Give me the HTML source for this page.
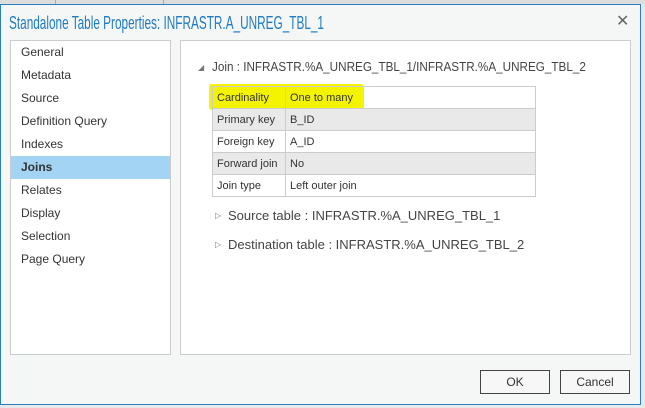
<!DOCTYPE html>
<html><head><style>
*{margin:0;padding:0;box-sizing:border-box}
body{width:645px;height:408px;background:#e8e8e8;font-family:"Liberation Sans",sans-serif;position:relative;overflow:hidden;font-size:12px;color:#333}
.dlg{position:absolute;left:0;top:4px;width:641px;height:401px;background:#f5f6f6;border:1px solid #2a7fc4}
.title{position:absolute;left:8px;top:8px;font-size:18px;color:#1f7bc2;white-space:nowrap;transform:scaleX(0.655);transform-origin:0 0}
.x{position:absolute;left:615px;top:6px;font-size:16px;color:#666}
.list{position:absolute;left:9px;top:35px;width:161px;height:315px;background:#fff;border:1px solid #ccc}
.list div{height:23px;line-height:22px;padding-left:10px;font-size:12px;color:#333}
.list .sel{background:#a3d4f3;font-weight:bold}
.content{position:absolute;left:179px;top:35px;width:451px;height:315px;background:#fff;border:1px solid #ccc}
.h{position:absolute;font-size:13px;color:#444;white-space:nowrap}
.tri{position:absolute;font-size:8px;color:#777}
table{position:absolute;left:31px;top:45px;border-collapse:collapse;width:324px;font-size:11px}
td{border:1px solid #ccc;height:22px;padding-left:4px;color:#333}
td:first-child{width:73px}
tr.g td{background:#e9e9e9}
.hl{position:absolute;left:28px;top:43px;width:155px;height:26px;background:#f4f400;border-radius:3px}
.btn{position:absolute;top:365px;width:70px;height:24px;border:1px solid #444;background:#f7f7f7;text-align:center;line-height:22px;font-size:12px}
</style></head><body>
<div style="position:absolute;left:0;top:0;width:645px;height:4px;background:#ddd"></div>
<div style="position:absolute;left:55px;top:0;width:1px;height:4px;background:#aaa"></div>
<div style="position:absolute;left:163px;top:0;width:1px;height:4px;background:#aaa"></div>
<div class="dlg">
<div class="title">Standalone Table Properties: INFRASTR.A_UNREG_TBL_1</div>
<div class="x">✕</div>
<div class="list">
<div>General</div><div>Metadata</div><div>Source</div><div>Definition Query</div><div>Indexes</div><div class="sel">Joins</div><div>Relates</div><div>Display</div><div>Selection</div><div>Page Query</div>
</div>
<div class="content">
<div class="tri" style="left:17px;top:22px">◢</div>
<div class="h" style="left:31px;top:18px;transform:scaleX(0.9);transform-origin:0 0">Join : INFRASTR.%A_UNREG_TBL_1/INFRASTR.%A_UNREG_TBL_2</div>
<div class="hl"></div>
<table>
<tr><td>Cardinality</td><td>One to many</td></tr>
<tr class="g"><td>Primary key</td><td>B_ID</td></tr>
<tr><td>Foreign key</td><td>A_ID</td></tr>
<tr class="g"><td>Forward join</td><td>No</td></tr>
<tr><td>Join type</td><td>Left outer join</td></tr>
</table>
<div class="tri" style="left:34px;top:170px">▷</div>
<div class="h" style="left:47px;top:167px">Source table : INFRASTR.%A_UNREG_TBL_1</div>
<div class="tri" style="left:34px;top:199px">▷</div>
<div class="h" style="left:47px;top:196px">Destination table : INFRASTR.%A_UNREG_TBL_2</div>
</div>
<div class="btn" style="left:479px">OK</div>
<div class="btn" style="left:559px">Cancel</div>
</div>
</body></html>
